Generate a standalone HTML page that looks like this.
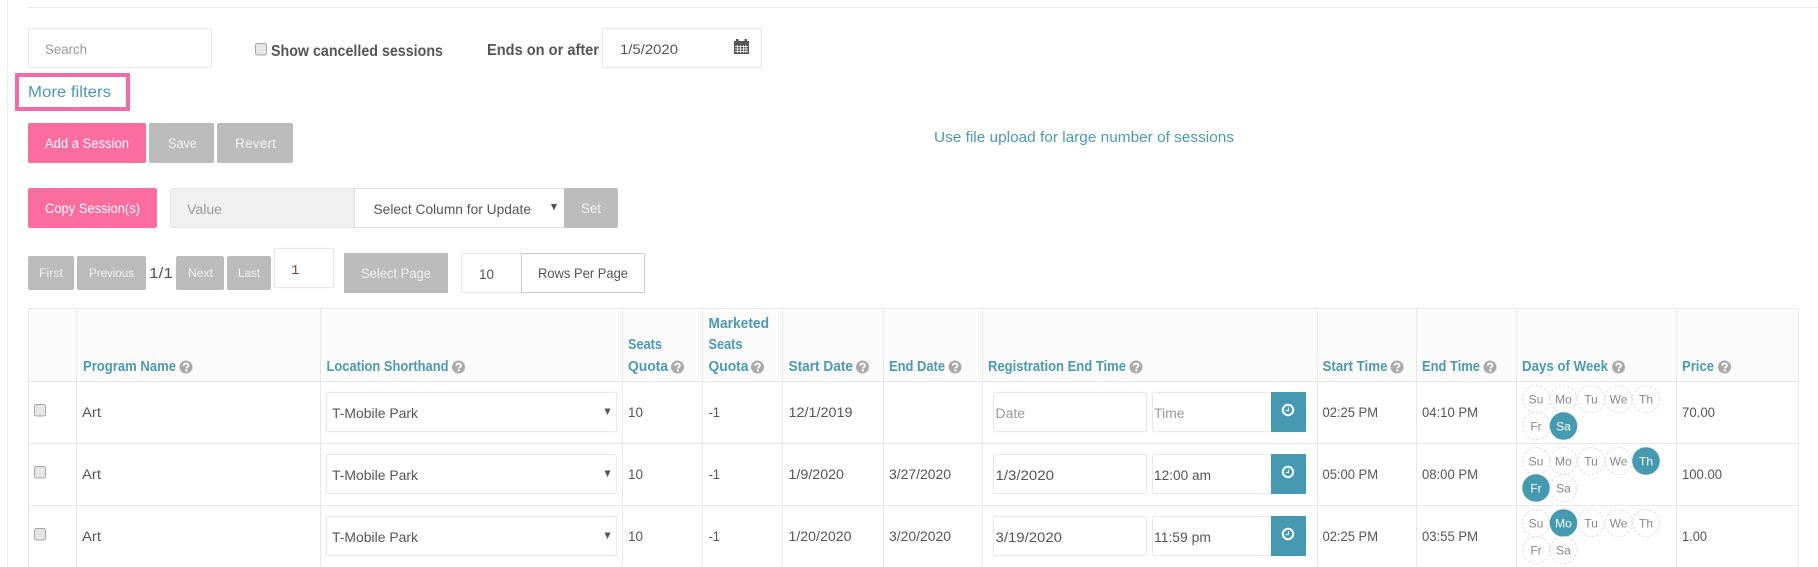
<!DOCTYPE html>
<html lang="en">
<head>
<meta charset="utf-8">
<title>Sessions</title>
<style>
html,body{margin:0;padding:0;background:#fff;width:1818px;height:567px;overflow:hidden}
svg{display:block}
text{font-family:"Liberation Sans",sans-serif;font-size:13.5px;fill:#555}
.b{font-weight:bold}
.l{fill:#4a9ab3;font-size:14.5px}
.h{fill:#4a9ab3;font-weight:bold;font-size:14.5px}
.p{fill:#999}
.w{fill:#fff}
.g{fill:#f1f1f1}
.d{font-size:12px;fill:#888;text-anchor:middle}
.on{fill:#fff}
.box{fill:#fff;stroke:#e9e9e9;stroke-width:1.2}
.c{fill:#fff;stroke:#ddd;stroke-width:1;stroke-dasharray:2.5 2}
.a{fill:#4599b0}
.ck{fill:#e6e6e6;stroke:#a5a5a5;stroke-width:1}
</style>
</head>
<body>
<svg width="1818" height="567" viewBox="0 0 1818 567" xmlns="http://www.w3.org/2000/svg">
<defs>
<g id="q"><circle cx="6.5" cy="6.5" r="6.5" fill="#aaa"/><path d="M4.2 5.2C4.3 3.7 5.3 3 6.6 3 8.1 3 9 3.9 9 5 9 6.4 7 6.5 6.9 8" fill="none" stroke="#fff" stroke-width="1.8"/><rect x="5.8" y="8.9" width="2.1" height="2" fill="#fff"/></g>
<path id="ar" d="M0 0H6L3 6.5Z" fill="#555"/>
<g id="ci"><circle cx="0" cy="0" r="5.2" fill="none" stroke="#fff" stroke-width="2"/><path d="M0.4-2.8V0.6H-2.4" fill="none" stroke="#fff" stroke-width="1"/></g>
</defs>

<rect x="7" y="0" width="1" height="567" fill="#eee"/>
<rect x="28" y="7" width="1790" height="1" fill="#e8e8e8"/>

<!-- Filters -->
<rect class="box" x="28.5" y="28.5" width="183" height="39" rx="2"/>
<text class="p" x="45" y="54" textLength="42" lengthAdjust="spacingAndGlyphs">Search</text>
<rect class="ck" x="255.5" y="43.5" width="11" height="11.5" rx="2"/>
<text class="b" x="271" y="56" textLength="172" lengthAdjust="spacingAndGlyphs" style="font-size:15.5px">Show cancelled sessions</text>
<text class="b" x="487" y="55" textLength="112" lengthAdjust="spacingAndGlyphs" style="font-size:15.5px">Ends on or after</text>
<rect class="box" x="602.5" y="28.5" width="159" height="39" rx="2"/>
<text x="620" y="54" textLength="58" lengthAdjust="spacingAndGlyphs" style="font-size:14px">1/5/2020</text>
<g fill="#555"><rect x="734" y="41" width="15" height="13"/><rect x="736" y="39" width="2.5" height="3"/><rect x="744.5" y="39" width="2.5" height="3"/></g>
<path d="M735 46.5H748M735 49H748M735 51.5H748M737.5 45V53M740.5 45V53M743.5 45V53M746 45V53" stroke="#fff" stroke-width=".7" fill="none"/>

<rect x="17" y="75" width="111" height="34" fill="#fff" stroke="#f26aa8" stroke-width="4"/>
<text class="l" x="28" y="97" textLength="83" lengthAdjust="spacingAndGlyphs" style="font-size:15.5px">More filters</text>

<!-- Actions -->
<rect x="28" y="123" width="118" height="40" rx="2" fill="#fb6d9e"/>
<text class="w" x="45" y="148" textLength="84" lengthAdjust="spacingAndGlyphs" style="font-size:14px">Add a Session</text>
<rect x="149" y="123" width="65" height="40" rx="2" fill="#bbb"/>
<text class="g" x="168" y="148" textLength="29" lengthAdjust="spacingAndGlyphs">Save</text>
<rect x="217" y="123" width="76" height="40" rx="2" fill="#bbb"/>
<text class="g" x="235" y="148" textLength="41" lengthAdjust="spacingAndGlyphs">Revert</text>
<text class="l" x="934" y="142" textLength="300" lengthAdjust="spacingAndGlyphs" style="font-size:15px">Use file upload for large number of sessions</text>

<rect x="28" y="188" width="129" height="40" rx="2" fill="#fb6d9e"/>
<text class="w" x="45" y="213" textLength="95" lengthAdjust="spacingAndGlyphs" style="font-size:14px">Copy Session(s)</text>
<rect x="170.5" y="188.5" width="184" height="39" rx="2" fill="#f0f0f0" stroke="#e6e6e6"/>
<text class="p" x="187" y="214" textLength="35" lengthAdjust="spacingAndGlyphs">Value</text>
<rect x="354.5" y="188.5" width="210" height="39" fill="#fff" stroke="#ddd"/>
<text x="373.5" y="214" textLength="157.5" lengthAdjust="spacingAndGlyphs" style="font-size:14px">Select Column for Update</text>
<use href="#ar" x="551" y="204"/>
<rect x="564" y="188" width="54" height="40" rx="2" fill="#bbb"/>
<text class="g" x="581" y="213" textLength="20" lengthAdjust="spacingAndGlyphs">Set</text>

<!-- Pagination -->
<rect x="28" y="256" width="46" height="34" rx="2" fill="#bbb"/>
<text class="g" x="39" y="277" textLength="24" lengthAdjust="spacingAndGlyphs" style="font-size:11.5px">First</text>
<rect x="77" y="256" width="69" height="34" rx="2" fill="#bbb"/>
<text class="g" x="89" y="277" textLength="45" lengthAdjust="spacingAndGlyphs" style="font-size:11.5px">Previous</text>
<text x="149" y="278" textLength="24" lengthAdjust="spacingAndGlyphs" style="font-size:15px">1/1</text>
<rect x="176" y="256" width="48" height="34" rx="2" fill="#bbb"/>
<text class="g" x="188" y="277" textLength="25" lengthAdjust="spacingAndGlyphs" style="font-size:11.5px">Next</text>
<rect x="227" y="256" width="44" height="34" rx="2" fill="#bbb"/>
<text class="g" x="238" y="277" textLength="22" lengthAdjust="spacingAndGlyphs" style="font-size:11.5px">Last</text>
<rect class="box" x="274.5" y="248.5" width="59" height="39" rx="2"/>
<text x="291" y="274" style="font-size:14px;font-family:'Liberation Mono',monospace;fill:#6f4f48">1</text>
<rect x="344" y="253" width="104" height="40" fill="#bbb"/>
<text class="g" x="361" y="278" textLength="70" lengthAdjust="spacingAndGlyphs" style="font-size:14px">Select Page</text>
<rect class="box" x="461.5" y="253.5" width="60" height="39" rx="2"/>
<text x="479" y="279" textLength="15" lengthAdjust="spacingAndGlyphs" style="font-size:14px">10</text>
<rect x="521.5" y="253.5" width="123" height="39" rx="1" fill="#fff" stroke="#ccc"/>
<text x="538" y="278" textLength="90" lengthAdjust="spacingAndGlyphs" style="font-size:14px">Rows Per Page</text>

<!-- Table -->
<rect x="28" y="308" width="1771" height="73" fill="#fbfbfb"/>
<g fill="#e8e8e8">
<rect x="28" y="308" width="1771" height="1"/><rect x="28" y="381" width="1771" height="1"/><rect x="28" y="443" width="1771" height="1"/><rect x="28" y="505" width="1771" height="1"/>
<rect x="28" y="308" width="1" height="259"/><rect x="76" y="308" width="1" height="259"/><rect x="320" y="308" width="1" height="259"/><rect x="622" y="308" width="1" height="259"/><rect x="702" y="308" width="1" height="259"/><rect x="782" y="308" width="1" height="259"/><rect x="883" y="308" width="1" height="259"/><rect x="982" y="308" width="1" height="259"/><rect x="1317" y="308" width="1" height="259"/><rect x="1416" y="308" width="1" height="259"/><rect x="1516" y="308" width="1" height="259"/><rect x="1676" y="308" width="1" height="259"/><rect x="1798" y="308" width="1" height="259"/>
</g>

<text class="h" x="83" y="371" textLength="93" lengthAdjust="spacingAndGlyphs">Program Name</text><use href="#q" x="179.5" y="360.5"/>
<text class="h" x="326.5" y="371" textLength="122" lengthAdjust="spacingAndGlyphs">Location Shorthand</text><use href="#q" x="452" y="360.5"/>
<text class="h" x="628" y="349" textLength="34" lengthAdjust="spacingAndGlyphs">Seats</text>
<text class="h" x="628" y="371" textLength="40" lengthAdjust="spacingAndGlyphs">Quota</text><use href="#q" x="671" y="360.5"/>
<text class="h" x="708.5" y="328" textLength="60.5" lengthAdjust="spacingAndGlyphs">Marketed</text>
<text class="h" x="708.5" y="349" textLength="34" lengthAdjust="spacingAndGlyphs">Seats</text>
<text class="h" x="708.5" y="371" textLength="40" lengthAdjust="spacingAndGlyphs">Quota</text><use href="#q" x="751" y="360.5"/>
<text class="h" x="788.5" y="371" textLength="64.5" lengthAdjust="spacingAndGlyphs">Start Date</text><use href="#q" x="856" y="360.5"/>
<text class="h" x="889" y="371" textLength="56" lengthAdjust="spacingAndGlyphs">End Date</text><use href="#q" x="948.5" y="360.5"/>
<text class="h" x="988" y="371" textLength="138" lengthAdjust="spacingAndGlyphs">Registration End Time</text><use href="#q" x="1129.5" y="360.5"/>
<text class="h" x="1322.5" y="371" textLength="65" lengthAdjust="spacingAndGlyphs">Start Time</text><use href="#q" x="1390.5" y="360.5"/>
<text class="h" x="1422" y="371" textLength="58" lengthAdjust="spacingAndGlyphs">End Time</text><use href="#q" x="1483.5" y="360.5"/>
<text class="h" x="1522" y="371" textLength="86" lengthAdjust="spacingAndGlyphs">Days of Week</text><use href="#q" x="1612" y="360.5"/>
<text class="h" x="1682" y="371" textLength="32" lengthAdjust="spacingAndGlyphs">Price</text><use href="#q" x="1718" y="360.5"/>

<!-- Row 1 -->
<g>
<rect class="ck" x="34.5" y="404.5" width="11" height="11.5" rx="2"/>
<text x="82" y="417" textLength="19" lengthAdjust="spacingAndGlyphs">Art</text>
<rect class="box" x="326.5" y="392.5" width="290" height="39" rx="2"/>
<text x="332" y="418" textLength="86" lengthAdjust="spacingAndGlyphs" style="font-size:14px">T-Mobile Park</text><use href="#ar" x="604.5" y="408.5"/>
<text x="628" y="417" textLength="15" lengthAdjust="spacingAndGlyphs">10</text>
<text x="708.5" y="417" textLength="11.5" lengthAdjust="spacingAndGlyphs">-1</text>
<text x="788.5" y="417" textLength="64" lengthAdjust="spacingAndGlyphs">12/1/2019</text>
<rect class="box" x="993.5" y="392.5" width="153" height="39" rx="2"/>
<text class="p" x="995.5" y="418" textLength="29.5" lengthAdjust="spacingAndGlyphs">Date</text>
<rect class="box" x="1152.5" y="392.5" width="120" height="39" rx="2"/>
<text class="p" x="1154" y="418" textLength="30.5" lengthAdjust="spacingAndGlyphs">Time</text>
<rect class="a" x="1271" y="392" width="35" height="40"/><use href="#ci" x="1288" y="410"/>
<text x="1322.5" y="417" textLength="55.5" lengthAdjust="spacingAndGlyphs">02:25 PM</text>
<text x="1422" y="417" textLength="56" lengthAdjust="spacingAndGlyphs">04:10 PM</text>
<circle class="c" cx="1536" cy="399" r="13.5"/><text class="d" x="1536" y="403.5">Su</text>
<circle class="c" cx="1563.5" cy="399" r="13.5"/><text class="d" x="1563.5" y="403.5">Mo</text>
<circle class="c" cx="1591" cy="399" r="13.5"/><text class="d" x="1591" y="403.5">Tu</text>
<circle class="c" cx="1618.5" cy="399" r="13.5"/><text class="d" x="1618.5" y="403.5">We</text>
<circle class="c" cx="1646" cy="399" r="13.5"/><text class="d" x="1646" y="403.5">Th</text>
<circle class="c" cx="1536" cy="426" r="13.5"/><text class="d" x="1536" y="430.5">Fr</text>
<circle class="a" cx="1563.5" cy="426" r="13.8"/><text class="d on" x="1563.5" y="430.5">Sa</text>
<text x="1682" y="417" textLength="33" lengthAdjust="spacingAndGlyphs">70.00</text>
</g>

<!-- Row 2 -->
<g transform="translate(0,62)">
<rect class="ck" x="34.5" y="404.5" width="11" height="11.5" rx="2"/>
<text x="82" y="417" textLength="19" lengthAdjust="spacingAndGlyphs">Art</text>
<rect class="box" x="326.5" y="392.5" width="290" height="39" rx="2"/>
<text x="332" y="418" textLength="86" lengthAdjust="spacingAndGlyphs" style="font-size:14px">T-Mobile Park</text><use href="#ar" x="604.5" y="408.5"/>
<text x="628" y="417" textLength="15" lengthAdjust="spacingAndGlyphs">10</text>
<text x="708.5" y="417" textLength="11.5" lengthAdjust="spacingAndGlyphs">-1</text>
<text x="788.5" y="417" textLength="55.5" lengthAdjust="spacingAndGlyphs">1/9/2020</text>
<text x="889" y="417" textLength="62" lengthAdjust="spacingAndGlyphs">3/27/2020</text>
<rect class="box" x="993.5" y="392.5" width="153" height="39" rx="2"/>
<text x="995.5" y="418" textLength="58.5" lengthAdjust="spacingAndGlyphs">1/3/2020</text>
<rect class="box" x="1152.5" y="392.5" width="120" height="39" rx="2"/>
<text x="1154" y="418" textLength="57" lengthAdjust="spacingAndGlyphs">12:00 am</text>
<rect class="a" x="1271" y="392" width="35" height="40"/><use href="#ci" x="1288" y="410"/>
<text x="1322.5" y="417" textLength="55.5" lengthAdjust="spacingAndGlyphs">05:00 PM</text>
<text x="1422" y="417" textLength="56" lengthAdjust="spacingAndGlyphs">08:00 PM</text>
<circle class="c" cx="1536" cy="399" r="13.5"/><text class="d" x="1536" y="403.5">Su</text>
<circle class="c" cx="1563.5" cy="399" r="13.5"/><text class="d" x="1563.5" y="403.5">Mo</text>
<circle class="c" cx="1591" cy="399" r="13.5"/><text class="d" x="1591" y="403.5">Tu</text>
<circle class="c" cx="1618.5" cy="399" r="13.5"/><text class="d" x="1618.5" y="403.5">We</text>
<circle class="a" cx="1646" cy="399" r="13.8"/><text class="d on" x="1646" y="403.5">Th</text>
<circle class="a" cx="1536" cy="426" r="13.8"/><text class="d on" x="1536" y="430.5">Fr</text>
<circle class="c" cx="1563.5" cy="426" r="13.5"/><text class="d" x="1563.5" y="430.5">Sa</text>
<text x="1682" y="417" textLength="40" lengthAdjust="spacingAndGlyphs">100.00</text>
</g>

<!-- Row 3 -->
<g transform="translate(0,124)">
<rect class="ck" x="34.5" y="404.5" width="11" height="11.5" rx="2"/>
<text x="82" y="417" textLength="19" lengthAdjust="spacingAndGlyphs">Art</text>
<rect class="box" x="326.5" y="392.5" width="290" height="39" rx="2"/>
<text x="332" y="418" textLength="86" lengthAdjust="spacingAndGlyphs" style="font-size:14px">T-Mobile Park</text><use href="#ar" x="604.5" y="408.5"/>
<text x="628" y="417" textLength="15" lengthAdjust="spacingAndGlyphs">10</text>
<text x="708.5" y="417" textLength="11.5" lengthAdjust="spacingAndGlyphs">-1</text>
<text x="788.5" y="417" textLength="63" lengthAdjust="spacingAndGlyphs">1/20/2020</text>
<text x="889" y="417" textLength="62" lengthAdjust="spacingAndGlyphs">3/20/2020</text>
<rect class="box" x="993.5" y="392.5" width="153" height="39" rx="2"/>
<text x="995.5" y="418" textLength="66.5" lengthAdjust="spacingAndGlyphs">3/19/2020</text>
<rect class="box" x="1152.5" y="392.5" width="120" height="39" rx="2"/>
<text x="1154" y="418" textLength="57" lengthAdjust="spacingAndGlyphs">11:59 pm</text>
<rect class="a" x="1271" y="392" width="35" height="40"/><use href="#ci" x="1288" y="410"/>
<text x="1322.5" y="417" textLength="55.5" lengthAdjust="spacingAndGlyphs">02:25 PM</text>
<text x="1422" y="417" textLength="56" lengthAdjust="spacingAndGlyphs">03:55 PM</text>
<circle class="c" cx="1536" cy="399" r="13.5"/><text class="d" x="1536" y="403.5">Su</text>
<circle class="a" cx="1563.5" cy="399" r="13.8"/><text class="d on" x="1563.5" y="403.5">Mo</text>
<circle class="c" cx="1591" cy="399" r="13.5"/><text class="d" x="1591" y="403.5">Tu</text>
<circle class="c" cx="1618.5" cy="399" r="13.5"/><text class="d" x="1618.5" y="403.5">We</text>
<circle class="c" cx="1646" cy="399" r="13.5"/><text class="d" x="1646" y="403.5">Th</text>
<circle class="c" cx="1536" cy="426" r="13.5"/><text class="d" x="1536" y="430.5">Fr</text>
<circle class="c" cx="1563.5" cy="426" r="13.5"/><text class="d" x="1563.5" y="430.5">Sa</text>
<text x="1682" y="417" textLength="25" lengthAdjust="spacingAndGlyphs">1.00</text>
</g>
</svg>
</body>
</html>
